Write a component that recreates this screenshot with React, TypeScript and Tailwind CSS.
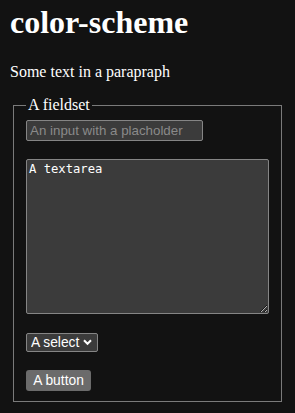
import React from "react";

export default function App() {
  return (
    <div className="min-h-[413px] bg-[#121212] text-white px-[8px] pt-[4px] pb-[10px] [color-scheme:dark]">
      <h1 className="m-0 text-[32px] leading-[37px] font-bold font-['Liberation_Serif',serif] pl-[2px]">
        color-scheme
      </h1>
      <p className="mt-[22px] text-[16px] leading-[18px] font-['Liberation_Serif',serif] pl-[2px]">
        Some text in a parapraph
      </p>
      <fieldset className="mt-[15px] mx-[5px] border border-[#7a7a7a] pl-[12px] pr-[12px] pt-[6px] pb-[10px]">
        <legend className="px-[2px] text-[16px] leading-[18px] font-['Liberation_Serif',serif]">
          A fieldset
        </legend>
        <div className="flex flex-col items-start">
          <input
            className="block w-[177px] h-[21px] bg-[#3b3b3b] border border-[#858585] rounded-[2px] px-[3px] text-[13.33px] font-['Liberation_Sans',Arial,sans-serif] text-white placeholder:text-[#8a8a8a] outline-none"
            placeholder="An input with a placholder"
          />
          <textarea
            className="block mt-[18px] w-[243px] h-[155px] bg-[#3b3b3b] border border-[#858585] rounded-[2px] px-[2px] py-[2px] text-[12.2px] leading-[15px] font-['DejaVu_Sans_Mono',monospace] text-white resize outline-none"
            defaultValue="A textarea"
          />
          <div className="relative mt-[19px] h-[19px]">
            <select className="block appearance-none w-[72px] h-[19px] bg-[#3b3b3b] border border-[#858585] rounded-[2px] pl-[4px] pr-[16px] py-0 text-[13.8px] leading-[17px] font-['Liberation_Sans',Arial,sans-serif] text-white outline-none">
              <option>A select</option>
            </select>
            <svg
              className="absolute right-[6px] top-[6px] pointer-events-none"
              width="9"
              height="7"
              viewBox="0 0 9 7"
            >
              <path d="M1 1.2 L4.5 4.8 L8 1.2" stroke="white" strokeWidth="2" fill="none" />
            </svg>
          </div>
          <button className="block mt-[18px] w-[65px] h-[21px] bg-[#6b6b6b] rounded-[3px] text-[13.8px] leading-[21px] font-['Liberation_Sans',Arial,sans-serif] text-white">
            A button
          </button>
        </div>
      </fieldset>
    </div>
  );
}
